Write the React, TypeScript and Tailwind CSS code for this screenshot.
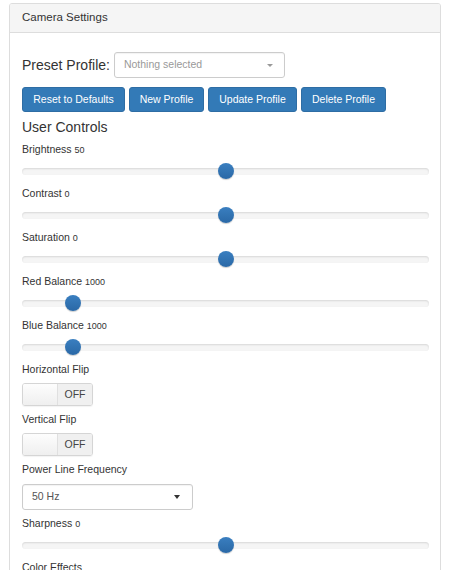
import React from 'react';

type SliderProps = {
    label: string;
    value: string;
    pos: number;
};

const Slider: React.FC<SliderProps> = ({ label, value, pos }) => {
    return (
        <div className="h-[44px]">
            <div className="h-[14px] leading-[14px] text-[10.5px] text-[#333]">
                {label} <span className="text-[9px]">{value}</span>
            </div>
            <div className="relative mt-[7px] h-[16px] flex items-center">
                <div className="w-full h-[7px] rounded-full bg-[#f5f5f5] shadow-[inset_0_1px_2px_rgba(0,0,0,0.12)]" />
                <div
                    className="absolute top-0 h-[16px] w-[16px] rounded-full bg-gradient-to-b from-[#3a7fc0] to-[#2a68a6] shadow-[0_1px_1px_rgba(0,0,0,0.2)]"
                    style={{ left: `calc((100% - 16px) * ${pos})` }}
                />
            </div>
        </div>
    );
};

const Toggle: React.FC<{ label: string }> = ({ label }) => {
    return (
        <div className="mb-[6px]">
            <div className="h-[14px] leading-[14px] text-[10.5px] text-[#333]">{label}</div>
            <div className="mt-[7px] flex h-[23px] w-[71px] overflow-hidden rounded-[3px] border border-[#d5d5d5] shadow-[0_1px_1px_rgba(0,0,0,0.05)]">
                <div className="w-[35px] bg-gradient-to-b from-[#fdfdfd] to-[#efefef] border-r border-[#e0e0e0]" />
                <div className="flex-1 flex items-center justify-center bg-[#f0f0f0] text-[10.5px] text-[#444]">OFF</div>
            </div>
        </div>
    );
};

const App: React.FC = () => {
    return (
        <div className="min-h-[570px] bg-white pt-[3px] font-['Liberation_Sans',Arial,sans-serif]">
            <div className="ml-[9px] w-[432px] h-[580px] border border-[#ddd] rounded-t-[3px] overflow-hidden">
                <div className="h-[29px] bg-[#f5f5f5] border-b border-[#ddd] pl-[12px] flex items-center text-[11.5px] text-[#333]">
                    Camera Settings
                </div>
                <div className="pl-[12px] pr-[11px] pt-[19px]">
                    <div className="flex items-center h-[26px]">
                        <span className="text-[14px] text-[#333] mr-[4px]">Preset Profile:</span>
                        <div className="w-[171px] h-[26px] rounded-[3px] border border-[#ccc] bg-white flex items-center justify-between pl-[9px] pr-[11px] shadow-[inset_0_1px_1px_rgba(0,0,0,0.05)]">
                            <span className="text-[10.5px] text-[#999]">Nothing selected</span>
                            <span className="w-0 h-0 border-l-[3px] border-r-[3px] border-t-[3px] border-l-transparent border-r-transparent border-t-[#999]" />
                        </div>
                    </div>
                    <div className="mt-[9px] flex gap-[4px]">
                        {[
                            ['Reset to Defaults', 'w-[103px]'],
                            ['New Profile', 'w-[75px]'],
                            ['Update Profile', 'w-[89px]'],
                            ['Delete Profile', 'w-[85px]'],
                        ].map(([t, w]) => (
                            <button
                                key={t}
                                className={`${w} h-[25px] rounded-[3px] bg-[#337ab7] border border-[#2e6da4] text-white text-[10.5px] flex items-center justify-center`}
                            >
                                {t}
                            </button>
                        ))}
                    </div>
                    <div className="mt-[7px] h-[16px] leading-[16px] text-[14px] text-[#333]">User Controls</div>
                    <div className="mt-[7px]">
                        <Slider label="Brightness" value="50" pos={0.5} />
                        <Slider label="Contrast" value="0" pos={0.5} />
                        <Slider label="Saturation" value="0" pos={0.5} />
                        <Slider label="Red Balance" value="1000" pos={0.11} />
                        <Slider label="Blue Balance" value="1000" pos={0.11} />
                        <Toggle label="Horizontal Flip" />
                        <Toggle label="Vertical Flip" />
                        <div className="h-[14px] leading-[14px] text-[10.5px] text-[#333]">Power Line Frequency</div>
                        <div className="mt-[8px] w-[171px] h-[26px] rounded-[3px] border border-[#ccc] bg-white flex items-center justify-between pl-[9px] pr-[12px] shadow-[inset_0_1px_1px_rgba(0,0,0,0.05)]">
                            <span className="text-[10.5px] text-[#555]">50 Hz</span>
                            <span className="w-0 h-0 border-l-[3px] border-r-[3px] border-t-[4px] border-l-transparent border-r-transparent border-t-[#333]" />
                        </div>
                        <div className="mt-[6px]">
                            <Slider label="Sharpness" value="0" pos={0.5} />
                        </div>
                        <div className="h-[14px] leading-[14px] text-[10.5px] text-[#333]">Color Effects</div>
                    </div>
                </div>
            </div>
        </div>
    );
};

export default App;
